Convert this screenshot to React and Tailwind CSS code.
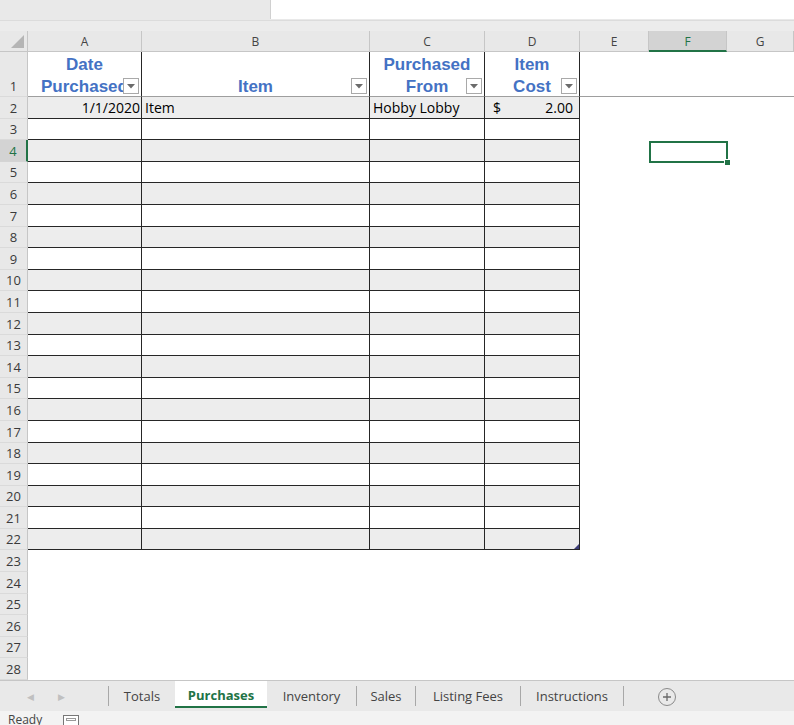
import React from 'react';

const COLS = [
  { k: 'A', w: 'w-[114px]' },
  { k: 'B', w: 'w-[228px]' },
  { k: 'C', w: 'w-[115px]' },
  { k: 'D', w: 'w-[95px]' },
  { k: 'E', w: 'w-[69px]' },
  { k: 'F', w: 'w-[78px]' },
  { k: 'G', w: 'w-[67px]' },
];

const TABLE = ['A', 'B', 'C', 'D'];

function FilterButton() {
  return (
    <div className="absolute right-[2px] bottom-[2px] z-10 flex h-[16px] w-[16px] items-center justify-center border border-[#a9a9a9] bg-white">
      <svg width="8" height="5" viewBox="0 0 8 5">
        <path d="M0 0 L8 0 L4 4.5 Z" fill="#6b6b6b" />
      </svg>
    </div>
  );
}

function RowHead({ n, active }) {
  return (
    <div
      className={
        active
          ? 'flex w-[28px] shrink-0 items-end justify-center border-r-2 border-b border-r-[#217346] border-b-[#d4d4d4] bg-[#d3d3d3] text-[13px] leading-[20px] text-[#217346]'
          : 'flex w-[28px] shrink-0 items-end justify-center border-r border-b border-r-[#c6c6c6] border-b-[#dadada] bg-[#e8e8e8] text-[13px] leading-[20px] text-[#3a3a3a]'
      }
    >
      {n}
    </div>
  );
}

function HeaderRow() {
  const labels = {
    A: ['Date', 'Purchased'],
    B: ['Item'],
    C: ['Purchased', 'From'],
    D: ['Item', 'Cost'],
  };
  return (
    <div className="flex h-[45px]">
      <RowHead n={1} />
      {COLS.map((c) => {
        const inTable = TABLE.includes(c.k);
        return (
          <div
            key={c.k}
            className={
              c.w +
              ' relative shrink-0 overflow-hidden border-b border-b-[#9e9e9e] bg-white ' +
              (inTable ? 'border-r border-r-[#262626]' : '')
            }
          >
            {inTable && (
              <>
                <div className="flex h-full translate-y-[2px] flex-col items-center justify-end font-['Liberation_Sans',Arial,sans-serif] text-[17px] font-bold leading-[22px] text-[#4472c4]">
                  {labels[c.k].map((l) => (
                    <span key={l} className="whitespace-nowrap">{l}</span>
                  ))}
                </div>
                <FilterButton />
              </>
            )}
          </div>
        );
      })}
    </div>
  );
}

function DataRow({ n }) {
  const inTableRow = n <= 22;
  const shaded = inTableRow && n % 2 === 0;
  const active = n === 4;
  return (
    <div className="flex h-[21.6px]">
      <RowHead n={n} active={active} />
      {COLS.map((c) => {
        const inTable = inTableRow && TABLE.includes(c.k);
        let cls = c.w + ' relative flex shrink-0 items-center whitespace-nowrap pt-[1px] text-[14px] text-black ';
        if (inTable) {
          cls += 'border-r border-b border-[#262626] ' + (shaded ? 'bg-[#ededed] ' : 'bg-white ');
        } else {
          cls += 'bg-white ';
        }
        return (
          <div key={c.k} className={cls}>
            {n === 2 && c.k === 'A' && <span className="ml-auto pr-[1px]">1/1/2020</span>}
            {n === 2 && c.k === 'B' && <span className="pl-[3px]">Item</span>}
            {n === 2 && c.k === 'C' && <span className="pl-[3px]">Hobby Lobby</span>}
            {n === 2 && c.k === 'D' && (
              <div className="flex w-full justify-between pl-[8px] pr-[6px]">
                <span>$</span>
                <span>2.00</span>
              </div>
            )}
            {n === 22 && c.k === 'D' && (
              <svg className="absolute right-0 bottom-0" width="5" height="5" viewBox="0 0 5 5">
                <path d="M5 0 L5 5 L0 5 Z" fill="#3c3c78" />
              </svg>
            )}
            {active && c.k === 'F' && (
              <div className="absolute top-[1px] left-0 z-20 h-[22px] w-[79px] border-2 border-[#217346]">
                <div className="absolute right-[-5px] bottom-[-5px] h-[7px] w-[7px] border border-white bg-[#217346]" />
              </div>
            )}
          </div>
        );
      })}
    </div>
  );
}

function Tab({ label, active, w }) {
  if (active) {
    return (
      <div className={w + ' flex h-[27px] items-center justify-center self-start border-b-2 border-[#217346] bg-white pt-[5px] text-[13px] font-bold text-[#217346]'}>
        {label}
      </div>
    );
  }
  return (
    <div className={w + ' flex h-full items-center justify-center pt-[2px] text-[13px] text-[#444]'}>
      {label}
    </div>
  );
}

function Sep() {
  return <div className="h-[20px] w-px bg-[#a8a8a8]" />;
}

export default function App() {
  const rows = [];
  for (let i = 2; i <= 28; i++) rows.push(i);

  return (
    <div className="h-[725px] w-[794px] overflow-hidden bg-white font-['Open_Sans','Noto_Sans',sans-serif]">
      {/* formula bar strip */}
      <div className="flex h-[20px] bg-[#e9e9e9]">
        <div className="w-[270px]" />
        <div className="h-[19px] flex-1 border-l border-[#d0d0d0] bg-white" />
      </div>
      <div className="h-[11px] border-t border-[#dcdcdc] bg-[#ececec]" />

      {/* column headers */}
      <div className="flex h-[21px] bg-[#e8e8e8]">
        <div className="relative w-[28px] shrink-0 border-r border-b border-[#c6c6c6]">
          <svg className="absolute right-[3px] bottom-[3px]" width="13" height="13" viewBox="0 0 13 13">
            <path d="M13 0 L13 13 L0 13 Z" fill="#b5b5b5" />
          </svg>
        </div>
        {COLS.map((c) =>
          c.k === 'F' ? (
            <div key={c.k} className={c.w + ' flex shrink-0 items-center justify-center border-r border-b-2 border-r-[#c6c6c6] border-b-[#217346] bg-[#d3d3d3] pt-[3px] text-[12px] text-[#217346]'}>
              {c.k}
            </div>
          ) : (
            <div key={c.k} className={c.w + ' flex shrink-0 items-center justify-center border-r border-b border-[#c6c6c6] pt-[2px] text-[12px] text-[#444]'}>
              {c.k}
            </div>
          )
        )}
      </div>

      <HeaderRow />
      {rows.map((n) => (
        <DataRow key={n} n={n} />
      ))}

      {/* sheet tabs */}
      <div className="flex h-[31px] items-center border-t border-[#c6c6c6] bg-[#e9e9e9]">
        <div className="flex w-[108px] items-center pt-[2px]">
          <span className="ml-[27px] text-[9px] text-[#c0c0c0]">◀</span>
          <span className="ml-[24px] text-[9px] text-[#c0c0c0]">▶</span>
        </div>
        <Sep />
        <Tab label="Totals" w="w-[66px]" />
        <Tab label="Purchases" w="w-[92px]" active />
        <Tab label="Inventory" w="w-[89px]" />
        <Sep />
        <Tab label="Sales" w="w-[58px]" />
        <Sep />
        <Tab label="Listing Fees" w="w-[104px]" />
        <Sep />
        <Tab label="Instructions" w="w-[102px]" />
        <Sep />
        <div className="ml-[34px] mt-[2px] flex h-[18px] w-[18px] items-center justify-center rounded-full border border-[#8a8a8a]">
          <svg width="10" height="10" viewBox="0 0 10 10">
            <path d="M5 1 V9 M1 5 H9" stroke="#6a6a6a" strokeWidth="1.3" />
          </svg>
        </div>
      </div>

      {/* status bar */}
      <div className="flex h-[14px] items-start bg-[#f3f3f3]">
        <span className="ml-[8px] mt-[2px] text-[12px] leading-[14px] text-[#444]">Ready</span>
        <div className="ml-[21px] mt-[4px] h-[12px] w-[16px] border border-[#777] bg-white">
          <div className="mx-[2px] mt-[2px] h-[3px] border border-[#999]" />
        </div>
      </div>
    </div>
  );
}
